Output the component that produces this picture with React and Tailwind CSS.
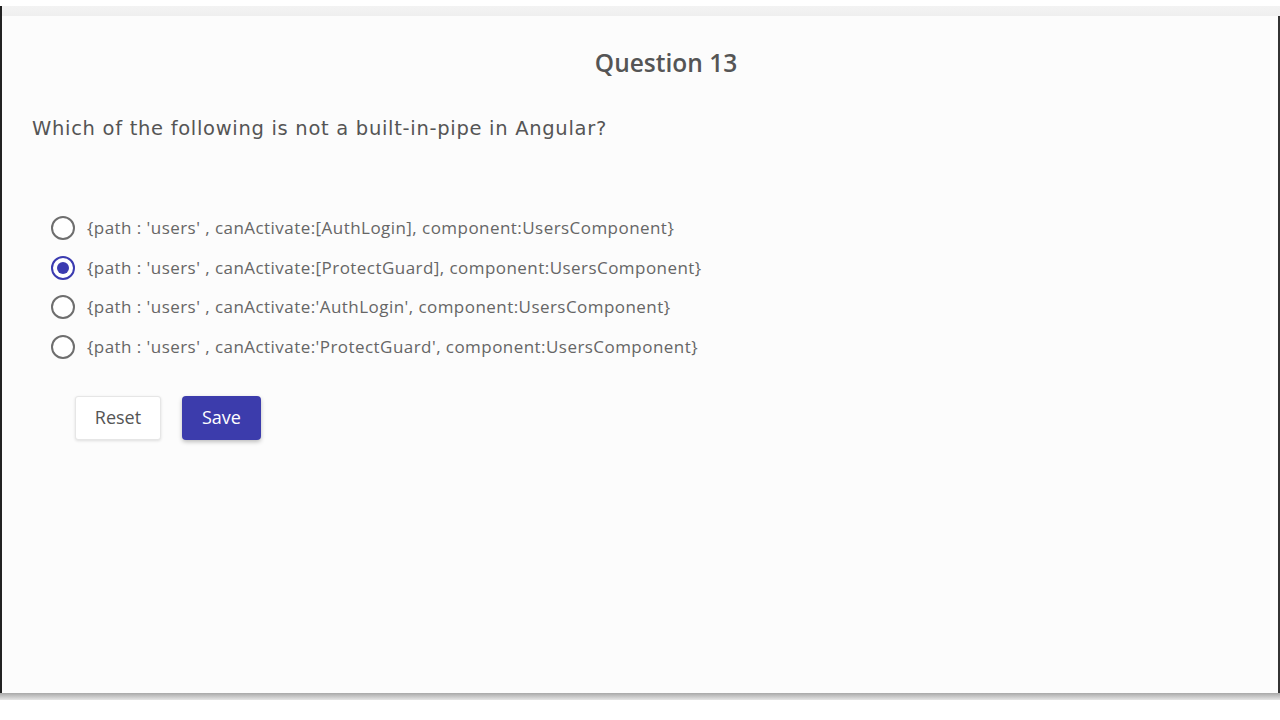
import { useState } from "react";

const options = [
    "{path : 'users' , canActivate:[AuthLogin], component:UsersComponent}",
    "{path : 'users' , canActivate:[ProtectGuard], component:UsersComponent}",
    "{path : 'users' , canActivate:'AuthLogin', component:UsersComponent}",
    "{path : 'users' , canActivate:'ProtectGuard', component:UsersComponent}",
];

const Radio = ({ checked }) => (
    <div className={`h-[24px] w-[24px] rounded-full border-2 flex items-center justify-center bg-white ${checked ? "border-[#3b3bb0]" : "border-[#6e6e6e]"}`}>
        {checked && <div className="h-[12px] w-[12px] rounded-full bg-[#3b3bb0]" />}
    </div>
);

const App = () => {
    const [selected, setSelected] = useState(1);

    return (
        <div className="h-[720px] w-full bg-white flex flex-col overflow-hidden">
            <div className="h-[6px] bg-white" />
            <div className="h-[10px] bg-gradient-to-b from-[#f3f3f3] to-[#efefef] border-l-2 border-[#222]" />
            <div className="h-[677px] bg-[#fcfcfc] border-l-2 border-r-2 border-l-[#222] border-r-[#333] flex flex-col">
                <h1 className="mt-[32px] pl-[52px] text-center text-[24.5px] leading-[30px] font-semibold text-[#555] [font-family:'Open_Sans',sans-serif]">
                    Question 13
                </h1>
                <p className="mt-[36px] pl-[30px] text-[19.5px] leading-[30px] text-[#555] [font-family:'DejaVu_Sans',sans-serif] tracking-[0.7px]">
                    Which of the following is not a built-in-pipe in Angular?
                </p>
                <div className="mt-[72px] pl-[49px] flex flex-col gap-[15.5px]">
                    {options.map((option, index) => (
                        <label key={index} className="flex items-center gap-[12px] h-[24px] cursor-pointer" onClick={() => setSelected(index)}>
                            <Radio checked={selected === index} />
                            <span className="text-[17px] text-[#666] [font-family:'Open_Sans',sans-serif] tracking-[0.45px]">{option}</span>
                        </label>
                    ))}
                </div>
                <div className="mt-[37px] pl-[73px] flex gap-[21px]">
                    <button type="button" className="h-[44px] w-[86px] bg-white border border-[#e6e6e6] rounded-[3px] shadow-[0_1px_3px_rgba(0,0,0,0.12)] text-[18px] text-[#555] [font-family:'Open_Sans',sans-serif]">
                        Reset
                    </button>
                    <button type="button" className="h-[44px] w-[79px] bg-[#3c3cac] rounded-[4px] shadow-[0_2px_4px_rgba(0,0,0,0.25)] text-[18px] text-white [font-family:'Open_Sans',sans-serif]">
                        Save
                    </button>
                </div>
            </div>
            <div className="h-[7px] bg-gradient-to-b from-[#a8a8a8] to-[#e6e6e6]" />
            <div className="flex-1 bg-white" />
        </div>
    );
};

export default App;
